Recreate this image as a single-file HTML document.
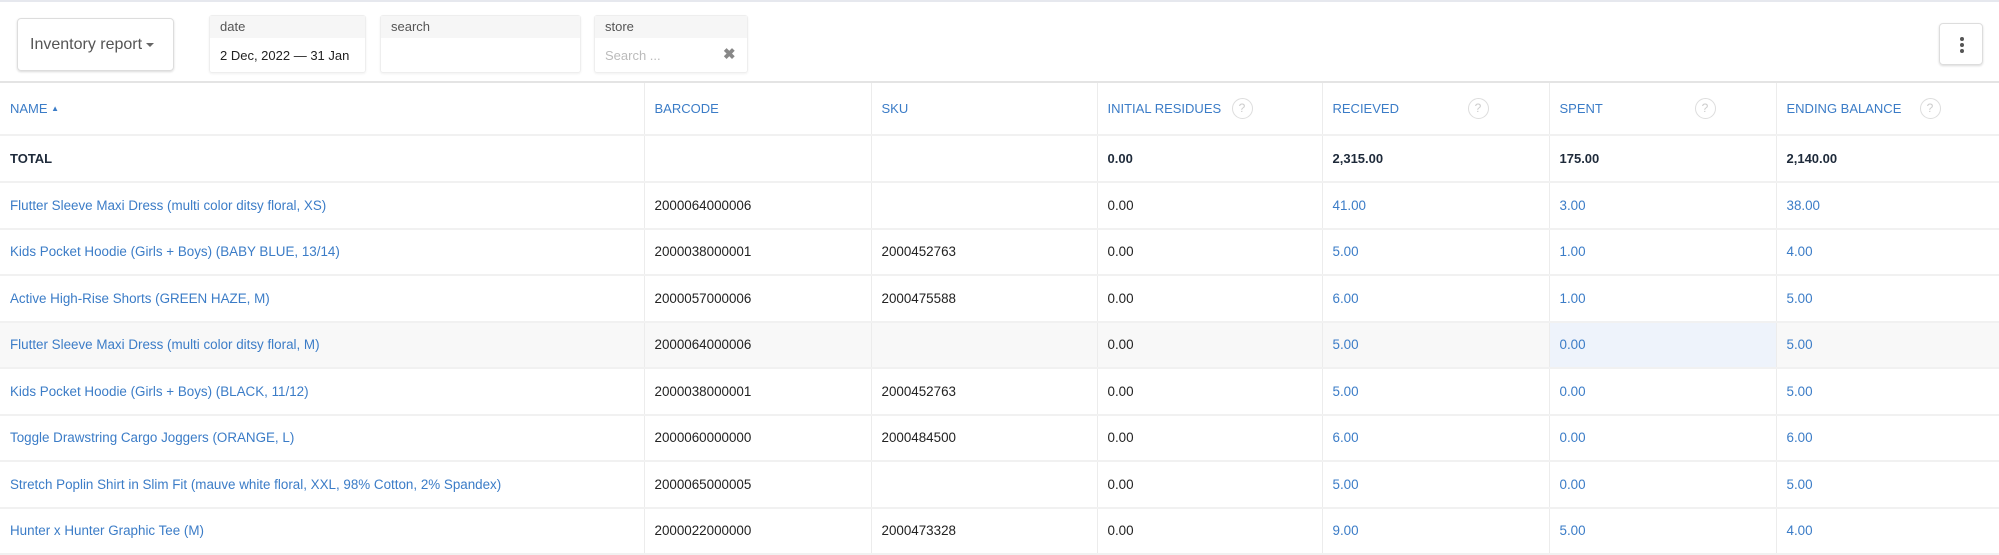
<!DOCTYPE html>
<html><head><meta charset="utf-8"><style>
*{box-sizing:border-box;margin:0;padding:0}
body{width:1999px;height:553px;overflow:hidden;background:#fff;font-family:"Liberation Sans",sans-serif;position:relative}
.top{position:absolute;left:0;top:0;width:1999px;height:83px;border-top:2px solid #e6e8ee;border-bottom:2px solid #e4e4e4}
.btn{position:absolute;left:17px;top:16px;width:157px;height:53px;border:1px solid #ddd;border-radius:4px;box-shadow:0 1px 2px rgba(0,0,0,.15);font-size:16px;color:#555;line-height:51px;padding-left:12px}
.btn:after{content:"";display:inline-block;margin-left:4px;vertical-align:middle;border:4px solid transparent;border-top:4px solid #666;border-bottom:0}
.fb{position:absolute;top:13px;height:58px;border:1px solid #eee;border-radius:3px;box-shadow:0 1px 2px rgba(0,0,0,.06)}
.fb .l{height:22px;background:#f6f6f6;font-size:13px;color:#555;padding:3px 0 0 10px}
.fb .v{font-size:13px;color:#222;padding:10px 0 0 10px}
.menu{position:absolute;left:1939px;top:21px;width:44px;height:42px;border:1px solid #ddd;border-radius:4px;box-shadow:0 1px 2px rgba(0,0,0,.15)}
.menu i{position:absolute;left:20px;width:4px;height:4px;border-radius:2px;background:#555}
table{position:absolute;left:0;top:83px;border-collapse:collapse;table-layout:fixed;width:1999px}
td{border-right:1px solid #ececec;border-bottom:2px solid #f1f1f1;padding:0 10px;font-size:13.4px;color:#222;height:46.5px;white-space:nowrap;position:relative}
td:last-child{border-right:0}
tr.h td{height:52px;color:#3b7cc7;font-size:13px}
tr.t td{height:47px;font-weight:bold;color:#1e2a3a;font-size:13px}
.b{color:#3b7cc7}
.q{position:absolute;top:15px;width:21px;height:21px;border:1.5px solid #ddd;border-radius:50%;color:#ccc;font-size:12px;text-align:center;line-height:18px;font-weight:normal}
tr.hl td{background:#f8f8f8}
tr.hl td.s{background:#eef3fb}
</style></head><body>
<div class="top">
<div class="btn">Inventory report</div>
<div class="fb" style="left:209px;width:157px"><div class="l">date</div><div class="v">2 Dec, 2022 — 31 Jan</div></div>
<div class="fb" style="left:380px;width:201px"><div class="l">search</div></div>
<div class="fb" style="left:594px;width:154px"><div class="l">store</div><div class="v" style="color:#bbb">Search ...<span style="position:absolute;left:128px;top:29px;color:#888;font-weight:bold;font-size:15px">✖</span></div></div>
<div class="menu"><i style="top:13px"></i><i style="top:19px"></i><i style="top:25px"></i></div>
</div>
<table>
<colgroup><col style="width:644px"><col style="width:227px"><col style="width:226px"><col style="width:225px"><col style="width:227px"><col style="width:227px"><col style="width:223px"></colgroup>
<tr class="h"><td>NAME <span style="font-size:8px;vertical-align:2px">▲</span></td><td>BARCODE</td><td>SKU</td><td>INITIAL RESIDUES<span class="q" style="left:134px">?</span></td><td>RECIEVED<span class="q" style="left:145px">?</span></td><td>SPENT<span class="q" style="left:145px">?</span></td><td>ENDING BALANCE<span class="q" style="left:143px">?</span></td></tr>
<tr class="t"><td>TOTAL</td><td></td><td></td><td>0.00</td><td>2,315.00</td><td>175.00</td><td>2,140.00</td></tr>
<tr><td class="b">Flutter Sleeve Maxi Dress (multi color ditsy floral, XS)</td><td>2000064000006</td><td></td><td>0.00</td><td class="b">41.00</td><td class="b">3.00</td><td class="b">38.00</td></tr>
<tr><td class="b">Kids Pocket Hoodie (Girls + Boys) (BABY BLUE, 13/14)</td><td>2000038000001</td><td>2000452763</td><td>0.00</td><td class="b">5.00</td><td class="b">1.00</td><td class="b">4.00</td></tr>
<tr><td class="b">Active High-Rise Shorts (GREEN HAZE, M)</td><td>2000057000006</td><td>2000475588</td><td>0.00</td><td class="b">6.00</td><td class="b">1.00</td><td class="b">5.00</td></tr>
<tr class="hl"><td class="b">Flutter Sleeve Maxi Dress (multi color ditsy floral, M)</td><td>2000064000006</td><td></td><td>0.00</td><td class="b">5.00</td><td class="b s">0.00</td><td class="b">5.00</td></tr>
<tr><td class="b">Kids Pocket Hoodie (Girls + Boys) (BLACK, 11/12)</td><td>2000038000001</td><td>2000452763</td><td>0.00</td><td class="b">5.00</td><td class="b">0.00</td><td class="b">5.00</td></tr>
<tr><td class="b">Toggle Drawstring Cargo Joggers (ORANGE, L)</td><td>2000060000000</td><td>2000484500</td><td>0.00</td><td class="b">6.00</td><td class="b">0.00</td><td class="b">6.00</td></tr>
<tr><td class="b">Stretch Poplin Shirt in Slim Fit (mauve white floral, XXL, 98% Cotton, 2% Spandex)</td><td>2000065000005</td><td></td><td>0.00</td><td class="b">5.00</td><td class="b">0.00</td><td class="b">5.00</td></tr>
<tr><td class="b">Hunter x Hunter Graphic Tee (M)</td><td>2000022000000</td><td>2000473328</td><td>0.00</td><td class="b">9.00</td><td class="b">5.00</td><td class="b">4.00</td></tr>
</table>
</body></html>
